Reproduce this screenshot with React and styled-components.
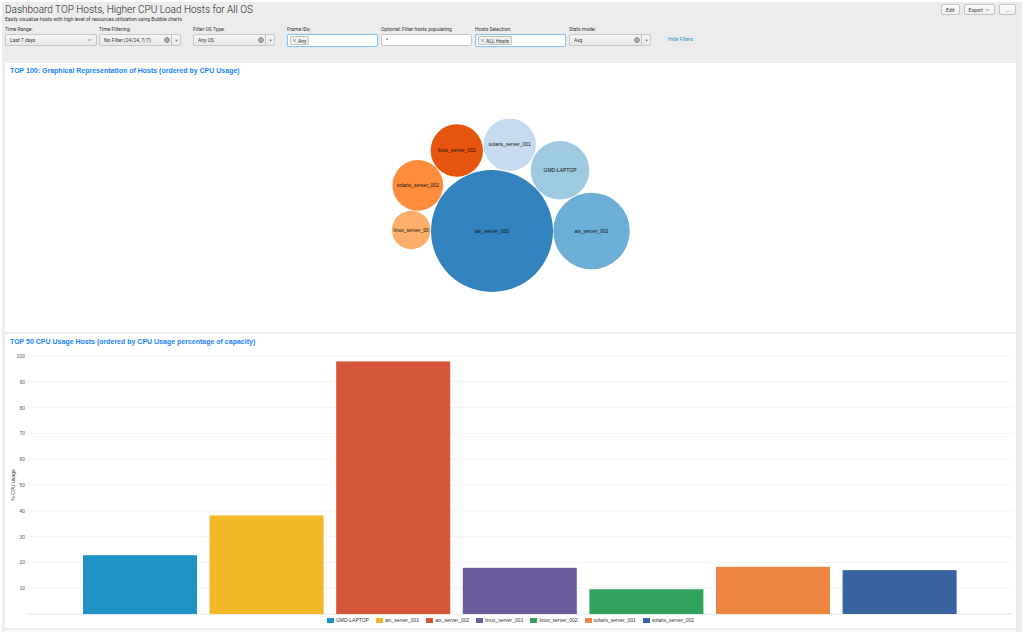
import styled, { createGlobalStyle } from "styled-components";

const GlobalStyle = createGlobalStyle`
  * {
    box-sizing: border-box;
  }

  body {
    margin: 0;
    background: #ffffff;
    font-family: Roboto, "Liberation Sans", sans-serif;
    font-size: 5px;
    color: #333333;
  }

  button,
  input,
  select {
    font: inherit;
    color: inherit;
    margin: 0;
  }
`;

const Page = styled.div`
  margin: 2px 2px 0;
  padding: 0 6px 0 3px;
  background: #ececec;
`;

const Header = styled.header`
  display: flex;
  justify-content: space-between;
  align-items: flex-start;
  height: 24px;
`;

const Title = styled.h1`
  margin: 0;
  font-size: 10px;
  line-height: 15px;
  font-weight: 300;
  color: #222222;
`;

const Description = styled.p`
  margin: 0;
  line-height: 4px;
  font-size: 5px;
`;

const Actions = styled.div`
  display: flex;
  gap: 4px;
  padding-top: 2px;
`;

const Btn = styled.button`
  display: flex;
  align-items: center;
  justify-content: center;
  gap: 2px;
  min-width: 17px;
  height: 11px;
  padding: 0 4px;
  border: 1px solid #c4c4c4;
  border-radius: 2px;
  background: linear-gradient(#fdfdfd, #f0f0f0);
`;

const Filters = styled.form`
  display: flex;
  align-items: flex-start;
  gap: 2px;
  height: 37px;
`;

const Field = styled.div`
  width: 92px;
`;

const Label = styled.label`
  display: block;
  height: 8px;
  line-height: 6px;
  white-space: nowrap;
`;

const SelectBox = styled.div`
  display: flex;
  align-items: center;
  width: ${(p) => (p.$wide ? "92px" : "82px")};
  height: 12px;
  border: 1px solid #c8c8c8;
  border-radius: 2px;
  background: linear-gradient(#f6f6f6, #e8e8e8);
  overflow: hidden;
`;

const Select = styled.select`
  flex: 1;
  min-width: 0;
  height: 100%;
  padding: 0 4px;
  border: 0;
  background: none;
  appearance: none;
`;

const ClearBtn = styled.button`
  display: flex;
  padding: 0;
  margin-right: 1px;
  border: 0;
  background: none;
`;

const Arrow = styled.span`
  display: flex;
  align-items: center;
  justify-content: center;
  width: 9px;
  height: 100%;
  border-left: ${(p) => (p.$plain ? "0" : "1px solid #c4c4c4")};
  margin-right: ${(p) => (p.$plain ? "2px" : "0")};
`;

const TextInput = styled.input`
  display: block;
  width: 91px;
  height: 12px;
  padding: 0 4px;
  border: 1px solid #c8c8c8;
  border-radius: 2px;
  background: #ffffff;
`;

const MultiBox = styled.div`
  display: flex;
  align-items: center;
  width: 91px;
  height: 13px;
  padding: 0 2px;
  border: 1px solid #8cc4ee;
  border-radius: 2px;
  background: #ffffff;
  box-shadow: 0 0 1px #8cc4ee;
`;

const Token = styled.button`
  display: flex;
  align-items: center;
  gap: 2px;
  height: 9px;
  padding: 0 2px;
  border: 1px solid #c4c4c4;
  border-radius: 1px;
  background: #efefef;
  white-space: nowrap;
`;

const TokenInput = styled.input`
  flex: 1;
  min-width: 0;
  height: 100%;
  padding: 0 2px;
  border: 0;
  outline: 0;
  background: none;
`;

const HideLink = styled.a`
  margin: 10px 0 0 5px;
  line-height: 6px;
  color: #1e93c6;
  text-decoration: none;
`;

const Panel = styled.section`
  margin-bottom: 2px;
  padding-top: 2px;
  background: #ffffff;
`;

const PanelTitle = styled.h2`
  margin: 0 5px;
  font-family: "Liberation Sans", Arial, sans-serif;
  font-size: 7px;
  line-height: 12px;
  font-weight: 700;
  color: #1a82ff;
`;

const BubbleSvg = styled.svg`
  display: block;
  width: 100%;
  height: 255px;
  font-family: "Liberation Sans", Arial, sans-serif;
  font-size: 5px;
`;

const BarSvg = styled.svg`
  display: block;
  width: 100%;
  font-family: "Liberation Sans", Arial, sans-serif;
  font-size: 5px;
`;

const Legend = styled.ul`
  display: flex;
  justify-content: center;
  gap: 7px;
  height: 13px;
  margin: 0;
  padding: 1px 0 0;
  list-style: none;
  font-family: "Liberation Sans", Arial, sans-serif;
`;

const LegendItem = styled.li`
  display: flex;
  align-items: center;
  gap: 2px;
  height: 8px;
`;

const Swatch = styled.span`
  width: 7px;
  height: 5px;
  background: ${(p) => p.$color};
`;

const NextPanel = styled.div`
  height: 2px;
  background: #f9f9f9;
`;

const bubbles = [
  { name: "aix_server_002", x: 492, y: 231, r: 61, color: "#3182bd" },
  { name: "aix_server_001", x: 591.5, y: 231, r: 38.3, color: "#6baed6" },
  { name: "GMD-LAPTOP", x: 560, y: 170.3, r: 29.3, color: "#9ecae1" },
  { name: "solaris_server_001", x: 509.7, y: 144.7, r: 26.2, color: "#c6dbef" },
  { name: "linux_server_001", x: 456.8, y: 150.5, r: 26.2, color: "#e6550d" },
  { name: "solaris_server_002", x: 417.8, y: 185.4, r: 25.4, color: "#fd8d3c" },
  { name: "linux_server_00", x: 411.2, y: 230, r: 19.3, color: "#fdae6b" },
];

const hosts = [
  { name: "GMD-LAPTOP", value: 22.8, color: "#1e93c6" },
  { name: "aix_server_001", value: 38.2, color: "#f2b827" },
  { name: "aix_server_002", value: 97.9, color: "#d6563c" },
  { name: "linux_server_001", value: 17.9, color: "#6a5c9e" },
  { name: "linux_server_002", value: 9.6, color: "#31a35f" },
  { name: "solaris_server_001", value: 18.3, color: "#ed8440" },
  { name: "solaris_server_002", value: 17, color: "#3863a0" },
];

const ticks = [0, 10, 20, 30, 40, 50, 60, 70, 80, 90, 100];
const BASE = 266;
const STEP = 2.58;

function Chevron() {
  return (
    <svg width="5" height="4" viewBox="0 0 5 4" fill="none" stroke="#777777">
      <path d="M0.7 1 L2.5 2.8 L4.3 1" strokeWidth="0.8" />
    </svg>
  );
}

function ClearIcon() {
  return (
    <svg width="6" height="6" viewBox="0 0 6 6" fill="none" stroke="#444444">
      <circle cx="3" cy="3" r="2.2" strokeWidth="0.9" />
      <path d="M2.2 2.2 L3.8 3.8 M3.8 2.2 L2.2 3.8" strokeWidth="0.5" />
    </svg>
  );
}

function SelectField({ id, label, value, plain }) {
  return (
    <Field>
      <Label htmlFor={id}>{label}</Label>
      <SelectBox $wide={plain}>
        <Select id={id}>
          <option>{value}</option>
        </Select>
        {!plain && (
          <ClearBtn type="button" aria-label="Clear">
            <ClearIcon />
          </ClearBtn>
        )}
        <Arrow $plain={plain}>
          {plain ? (
            <Chevron />
          ) : (
            <svg width="3" height="3" viewBox="0 0 3 3">
              <path d="M0 0.8 H3 L1.5 2.6 Z" fill="#777777" />
            </svg>
          )}
        </Arrow>
      </SelectBox>
    </Field>
  );
}

function MultiField({ id, label, token }) {
  return (
    <Field>
      <Label htmlFor={id}>{label}</Label>
      <MultiBox>
        <Token type="button">
          <svg width="3" height="3" viewBox="0 0 3 3" stroke="#666666">
            <path d="M0.4 0.4 L2.6 2.6 M2.6 0.4 L0.4 2.6" strokeWidth="0.8" />
          </svg>
          {token}
        </Token>
        <TokenInput id={id} />
      </MultiBox>
    </Field>
  );
}

function BubbleChart() {
  return (
    <BubbleSvg viewBox="5 77 1011 255">
      {bubbles.map((b) => (
        <g key={b.name}>
          <circle cx={b.x} cy={b.y} r={b.r} fill={b.color} />
          <text x={b.x} y={b.y + 1.5} textAnchor="middle" fill="#111111">
            {b.name}
          </text>
        </g>
      ))}
    </BubbleSvg>
  );
}

function BarChart() {
  return (
    <BarSvg viewBox="0 0 1011 267">
      {ticks.map((t) => {
        const y = BASE - t * STEP;
        return (
          <g key={t}>
            <path
              d={`M22 ${y} H1007`}
              stroke={t === 0 ? "#e2e2e2" : "#f3f3f3"}
              strokeWidth="1"
            />
            {t > 0 && (
              <text x="20" y={y + 2} textAnchor="end" fill="#555555">
                {t}
              </text>
            )}
          </g>
        );
      })}
      <text transform="translate(10 137) rotate(-90)" textAnchor="middle" fill="#333333">
        % CPU usage
      </text>
      {hosts.map((h, i) => (
        <rect
          key={h.name}
          x={78 + i * 126.6}
          y={BASE - h.value * STEP}
          width="114"
          height={h.value * STEP}
          fill={h.color}
        />
      ))}
    </BarSvg>
  );
}

function App() {
  return (
    <>
      <GlobalStyle />
      <Page>
        <Header>
          <div>
            <Title>Dashboard TOP Hosts, Higher CPU Load Hosts for All OS</Title>
            <Description>
              Easily visualize hosts with high level of resources utilization using Bubble charts
            </Description>
          </div>
          <Actions>
            <Btn type="button">Edit</Btn>
            <Btn type="button">
              Export <Chevron />
            </Btn>
            <Btn type="button">...</Btn>
          </Actions>
        </Header>
        <Filters>
          <SelectField id="range" label="Time Range:" value="Last 7 days" plain />
          <SelectField id="filtering" label="Time Filtering:" value="No Filter (24/24, 7/7)" />
          <SelectField id="os" label="Filter OS Type:" value="Any OS" />
          <MultiField id="frames" label="Frame IDs:" token="Any" />
          <Field>
            <Label htmlFor="populate">Optional: Filter hosts populating</Label>
            <TextInput id="populate" defaultValue="*" />
          </Field>
          <MultiField id="hosts" label="Hosts Selection:" token="ALL Hosts" />
          <SelectField id="stats" label="Stats mode:" value="Avg" />
          <HideLink href="#filters">Hide Filters</HideLink>
        </Filters>
        <Panel>
          <PanelTitle>TOP 100: Graphical Representation of Hosts (ordered by CPU Usage)</PanelTitle>
          <BubbleChart />
        </Panel>
        <Panel>
          <PanelTitle>TOP 50 CPU Usage Hosts (ordered by CPU Usage percentage of capacity)</PanelTitle>
          <BarChart />
          <Legend>
            {hosts.map((h) => (
              <LegendItem key={h.name}>
                <Swatch $color={h.color} />
                {h.name}
              </LegendItem>
            ))}
          </Legend>
        </Panel>
        <NextPanel />
      </Page>
    </>
  );
}

export default App;
